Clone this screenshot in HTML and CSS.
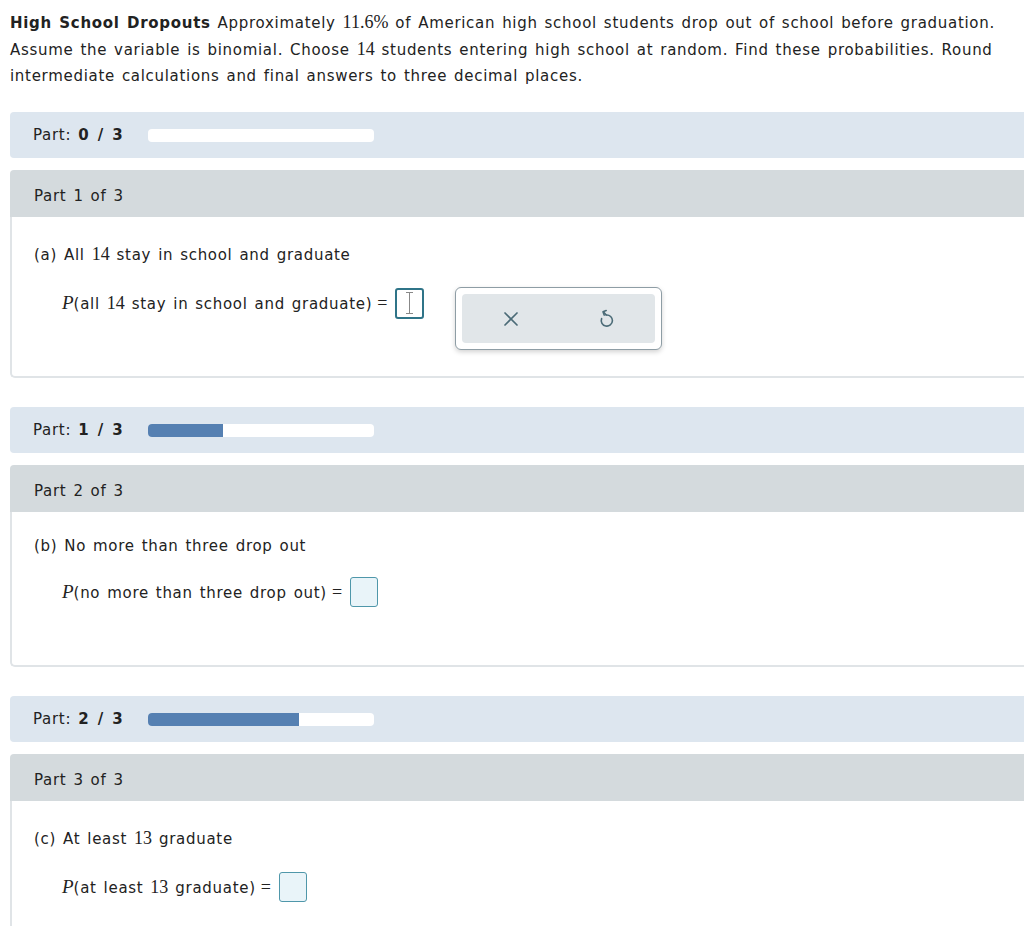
FILE: index.html
```html
<!DOCTYPE html>
<html>
<head>
<meta charset="utf-8">
<link rel="stylesheet" href="styles.css">
</head>
<body>
<div class="page">
  <p class="intro"><b>High School Dropouts</b> Approximately <span class="num">11.6%</span> of American high school students drop out of school before graduation.<br>Assume the variable is binomial. Choose <span class="num">14</span> students entering high school at random. Find these probabilities. Round<br>intermediate calculations and final answers to three decimal places.</p>

  <div class="partbar">
    <span class="partlabel">Part: <b>0 / 3</b></span>
    <span class="track"><span class="fill" style="width:0%"></span></span>
  </div>
  <section class="part">
    <div class="part-head">Part 1 of 3</div>
    <div class="part-body">
      <div class="question">(a) All <span class="num">14</span> stay in school and graduate</div>
      <div class="answer-row">
        <div class="equation"><span class="expr"><span class="pvar">P</span>(all <span class="num">14</span> stay in school and graduate)<span class="eq">=</span></span><span class="box focused"><span class="ibeam"></span></span></div>
        <div class="toolbar">
          <div class="tools">
            <span class="tool"><svg width="16" height="16" viewBox="0 0 16 16"><path d="M2 2 L14 14 M14 2 L2 14" stroke="#4b6b77" stroke-width="1.7" fill="none" stroke-linecap="round"/></svg></span>
            <span class="tool"><svg width="16" height="19" viewBox="0 0 16 19"><path d="M7.2 6 A5.6 5.6 0 1 1 2.6 9.6" stroke="#4b6b77" stroke-width="1.6" fill="none" stroke-linecap="round"/><path d="M8 2.6 L4.6 2.6 L4.6 6.2" stroke="#4b6b77" stroke-width="1.6" fill="none" stroke-linecap="round" stroke-linejoin="round" transform="rotate(-20 4.6 4.4)"/><path d="M4.8 3.2 L7.2 6" stroke="#4b6b77" stroke-width="1.6" fill="none" stroke-linecap="round"/></svg></span>
          </div>
        </div>
      </div>
    </div>
  </section>

  <div class="partbar">
    <span class="partlabel">Part: <b>1 / 3</b></span>
    <span class="track"><span class="fill" style="width:33.3%"></span></span>
  </div>
  <section class="part">
    <div class="part-head">Part 2 of 3</div>
    <div class="part-body">
      <div class="question">(b) No more than three drop out</div>
      <div class="answer-row">
        <div class="equation"><span class="expr"><span class="pvar">P</span>(no more than three drop out)<span class="eq">=</span></span><span class="box"></span></div>
      </div>
    </div>
  </section>

  <div class="partbar">
    <span class="partlabel">Part: <b>2 / 3</b></span>
    <span class="track"><span class="fill" style="width:66.6%"></span></span>
  </div>
  <section class="part">
    <div class="part-head">Part 3 of 3</div>
    <div class="part-body">
      <div class="question">(c) At least <span class="num">13</span> graduate</div>
      <div class="answer-row">
        <div class="equation"><span class="expr"><span class="pvar">P</span>(at least <span class="num">13</span> graduate)<span class="eq">=</span></span><span class="box"></span></div>
      </div>
    </div>
  </section>
</div>
</body>
</html>
```

FILE: styles.css
```css
html, body {
  margin: 0;
  padding: 0;
  background: #ffffff;
  overflow: hidden;
}
body {
  font-family: "DejaVu Sans", Verdana, sans-serif;
  font-size: 15px;
  letter-spacing: 0.7px;
  word-spacing: 1.5px;
  color: #222222;
}
.page {
  width: 1040px;
  padding: 9px 0 0 10px;
}
.intro {
  margin: 0 0 23px 0;
  line-height: 26px;
  white-space: nowrap;
}
.num {
  font-family: "Liberation Serif", "Times New Roman", serif;
  font-size: 18px;
  letter-spacing: 0;
  word-spacing: 0;
}
.question .num {
  display: inline-block;
  line-height: 26px;
}
.partbar {
  height: 46px;
  background: #dde6ef;
  border-radius: 4px 0 0 4px;
  display: flex;
  align-items: center;
  padding-left: 23px;
}
.partlabel {
  width: 115px;
  flex: none;
}
.partlabel b {
  font-weight: bold;
  word-spacing: 2.5px;
}
.track {
  width: 226px;
  height: 13px;
  background: #ffffff;
  border-radius: 4px;
  overflow: hidden;
  display: flex;
}
.fill {
  background: #5580b2;
  height: 100%;
}
.part {
  margin: 12px 0 29px 0;
}
.part-head {
  height: 47px;
  box-sizing: border-box;
  padding: 4px 0 0 24px;
  background: #d4dadd;
  border-radius: 4px 0 0 0;
  display: flex;
  align-items: center;
}
.part-body {
  border-left: 2px solid #e0e4e7;
  border-bottom: 2px solid #e0e4e7;
  border-radius: 0 0 0 5px;
  padding: 24px 0 26px 22px;
}
.question {
  line-height: 20px;
}
.answer-row {
  margin-top: 18px;
  min-height: 65px;
  display: flex;
  align-items: flex-start;
}
.equation {
  margin-top: 2px;
  margin-left: 28px;
  display: flex;
  align-items: center;
  height: 32px;
}
.expr {
  white-space: nowrap;
}
.pvar {
  font-family: "Liberation Serif", "Times New Roman", serif;
  font-style: italic;
  font-size: 19px;
  letter-spacing: 0;
}
.eq {
  font-family: "Liberation Serif", "Times New Roman", serif;
  font-size: 18px;
  letter-spacing: 0;
  margin: 0 8px 0 5px;
}
.box {
  width: 26px;
  height: 28px;
  border: 1.5px solid #4f97aa;
  background: #e9f4f9;
  border-radius: 3px;
  display: flex;
  align-items: center;
  justify-content: center;
}
.box.focused {
  width: 25px;
  height: 27px;
  border: 2.5px solid #2f7488;
  background: #ffffff;
}
.ibeam {
  width: 1px;
  height: 22px;
  background: #888888;
  position: relative;
}
.ibeam::before,
.ibeam::after {
  content: "";
  position: absolute;
  left: -3px;
  width: 7px;
  height: 1px;
  background: #888888;
}
.ibeam::before { top: 0; }
.ibeam::after { bottom: 0; }
.toolbar {
  margin-top: 2px;
  margin-left: 31px;
  width: 193px;
  height: 49px;
  border: 1px solid #8e9da5;
  border-radius: 6px;
  padding: 6px;
  box-shadow: 0 2px 5px rgba(0, 0, 0, 0.18);
  background: #ffffff;
}
.tools {
  height: 100%;
  background: #e1e6e9;
  border-radius: 4px;
  display: flex;
}
.tool {
  flex: 1;
  display: flex;
  align-items: center;
  justify-content: center;
}
```
